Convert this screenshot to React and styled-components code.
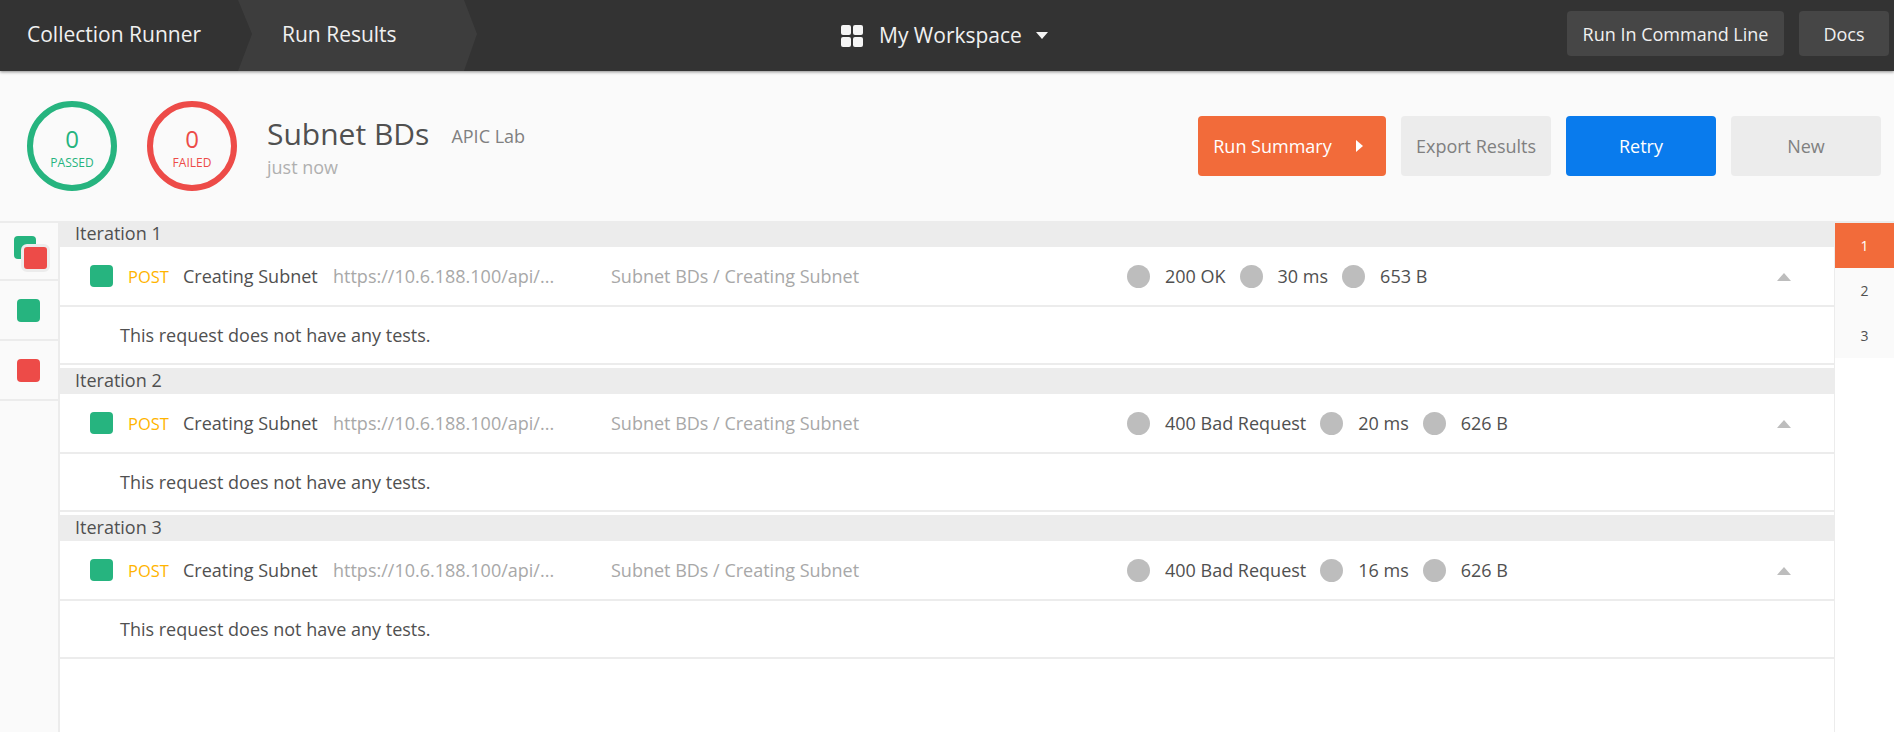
import React from "react";
import styled, { createGlobalStyle } from "styled-components";

const Global = createGlobalStyle`
  html, body { margin: 0; padding: 0; height: 100%; background: #fff; overflow: hidden; }
  #root { height: 100%; }
  * { box-sizing: border-box; }
`;

const Page = styled.div`
  width: 1894px;
  height: 732px;
  display: flex;
  flex-direction: column;
  font-family: "Open Sans", "Liberation Sans", sans-serif;
  color: #505050;
`;

const TopBar = styled.header`
  height: 71px;
  flex: none;
  background: #333;
  display: grid;
  grid-template-columns: 841px auto 1fr;
  align-items: center;
  box-shadow: 0 1px 3px rgba(0, 0, 0, 0.45);
  position: relative;
  z-index: 1;
  color: #f0f0f0;
`;

const Crumbs = styled.nav`
  display: flex;
  height: 71px;
`;

const FirstCrumb = styled.div`
  width: 238px;
  padding-left: 27px;
  font-size: 21px;
  line-height: 69px;
`;

const NextCrumb = styled.div`
  width: 239px;
  padding-left: 44px;
  font-size: 21px;
  line-height: 69px;
  background: #3d3d3d;
  clip-path: polygon(0 0, 226px 0, 239px 34px, 226px 71px, 0 71px, 14px 34px);
`;

const Workspace = styled.div`
  display: flex;
  align-items: center;
  font-size: 21px;
  height: 71px;
`;

const WorkspaceName = styled.span`
  margin: 0 14px 0 16px;
  line-height: 69px;
`;

const TopActions = styled.div`
  display: flex;
  justify-content: flex-end;
  gap: 15px;
  padding: 0 5px 4px 0;
`;

const TopButton = styled.button`
  height: 45px;
  width: ${(p) => p.$w}px;
  border: 0;
  border-radius: 4px;
  background: #464646;
  color: #f0f0f0;
  font: 18px "Open Sans", sans-serif;
  padding: 0;
`;

const Summary = styled.section`
  height: 150px;
  flex: none;
  background: #fafafa;
  display: flex;
  align-items: center;
  padding: 0 13px 0 27px;
`;

const Ring = styled.div`
  width: 90px;
  height: 90px;
  flex: none;
  margin-right: 30px;
  padding-top: 3px;
  border: 6px solid ${(p) => p.$c};
  border-radius: 50%;
  color: ${(p) => p.$c};
  display: flex;
  flex-direction: column;
  align-items: center;
  justify-content: center;
`;

const RingValue = styled.div`
  font-size: 24px;
  line-height: 30px;
  font-weight: 400;
`;

const RingLabel = styled.div`
  font-size: 12px;
  line-height: 16px;
  margin-top: 1px;
`;

const RunInfo = styled.div`
  flex: 1;
`;

const TitleLine = styled.div`
  display: flex;
  align-items: center;
`;

const Title = styled.h1`
  margin: 0;
  font-size: 30px;
  line-height: 38px;
  font-weight: 400;
  color: #505050;
`;

const Env = styled.span`
  margin: 4px 0 0 22px;
  font-size: 18px;
  color: #808080;
`;

const When = styled.div`
  margin: 2px 0 -2px;
  font-size: 18px;
  line-height: 24px;
  color: #b0b0b0;
`;

const Actions = styled.div`
  display: flex;
  gap: 15px;
`;

const ActionButton = styled.button`
  height: 60px;
  width: ${(p) => p.$w}px;
  border: 0;
  border-radius: 4px;
  background: ${(p) => p.$bg};
  color: ${(p) => p.$fg};
  font: 18px "Open Sans", sans-serif;
  padding: 0;
  display: flex;
  align-items: center;
  justify-content: center;
  gap: 24px;
`;

const SummaryButton = styled(ActionButton)`
  padding-right: 8px;
`;

const RightCaret = styled.span`
  width: 0;
  height: 0;
  border-left: 7px solid #fff;
  border-top: 6px solid transparent;
  border-bottom: 6px solid transparent;
`;

const Body = styled.div`
  flex: 1;
  display: flex;
  min-height: 0;
`;

const Filters = styled.aside`
  width: 60px;
  flex: none;
  background: #fafafa;
  border-right: 2px solid #ececec;
  border-top: 2px solid #ececec;
`;

const Filter = styled.div`
  height: ${(p) => (p.$first ? 58 : 60)}px;
  border-bottom: 2px solid #ececec;
  display: flex;
  align-items: center;
  padding-left: 17px;
`;

const Stack = styled.div`
  position: relative;
  width: 33px;
  height: 44px;
`;

const StackBack = styled.span`
  position: absolute;
  left: -3px;
  top: 7px;
  width: 22px;
  height: 23px;
  border-radius: 4px;
  background: #26b47f;
`;

const StackFront = styled.span`
  position: absolute;
  left: 4px;
  top: 15px;
  width: 29px;
  height: 28px;
  border-radius: 6px;
  background: #ed4b48;
  border: 3px solid #ececec;
`;

const Square = styled.span`
  width: ${(p) => p.$w || 23}px;
  height: ${(p) => p.$h || 23}px;
  flex: none;
  border-radius: 4px;
  background: ${(p) => p.$c};
`;

const Main = styled.main`
  flex: 1;
  min-width: 0;
  background: #fff;
`;

const Iteration = styled.div`
  margin-bottom: 3px;
`;

const IterationHead = styled.div`
  height: 26px;
  background: #ececec;
  padding-left: 15px;
  font-size: 18px;
  line-height: 24px;
  color: #505050;
`;

const ReqRow = styled.div`
  height: 60px;
  border-bottom: 2px solid #ececec;
  display: flex;
  align-items: center;
  padding: 0 0 0 30px;
  font-size: 18px;
  position: relative;
`;

const Method = styled.span`
  width: 55px;
  margin-left: 15px;
  font-size: 16.5px;
  color: #ffb400;
`;

const ReqName = styled.span`
  width: 150px;
`;

const Url = styled.span`
  width: 278px;
  color: #a8a8a8;
`;

const Path = styled.span`
  width: 516px;
  color: #a8a8a8;
`;

const Stat = styled.span`
  display: flex;
  align-items: center;
  gap: 15px;
  margin-right: 14px;
`;

const Dot = styled.span`
  width: 23px;
  height: 23px;
  flex: none;
  border-radius: 50%;
  background: #bdbdbd;
`;

const Collapse = styled.span`
  position: absolute;
  left: 1717px;
  top: 26px;
  width: 0;
  height: 0;
  border-left: 7px solid transparent;
  border-right: 7px solid transparent;
  border-bottom: 8px solid #bdbdbd;
`;

const Note = styled.div`
  height: 58px;
  border-bottom: 2px solid #ececec;
  padding-left: 60px;
  font-size: 18px;
  line-height: 56px;
`;

const Pager = styled.aside`
  width: 60px;
  flex: none;
  border-left: 1px solid #ececec;
  border-top: 2px solid #ececec;
`;

const PagerItem = styled.div`
  height: 45px;
  display: flex;
  align-items: center;
  justify-content: center;
  font-size: 14px;
  background: ${(p) => (p.$on ? "#f26b3a" : "#fafafa")};
  color: ${(p) => (p.$on ? "#fff" : "#505050")};
`;

const GridIcon = () => (
  <svg width="22" height="22" viewBox="0 0 22 22" fill="#f5f5f5">
    <rect x="0" y="0" width="10" height="10" rx="2" />
    <rect x="12" y="0" width="10" height="10" rx="2" />
    <rect x="0" y="12" width="10" height="10" rx="2" />
    <rect x="12" y="12" width="10" height="10" rx="2" />
  </svg>
);

const Caret = () => (
  <svg width="12" height="7" viewBox="0 0 12 7" fill="#f5f5f5">
    <path d="M0 0h12L6 7z" />
  </svg>
);

const iterations = [
  { n: 1, status: "200 OK", time: "30 ms", size: "653 B" },
  { n: 2, status: "400 Bad Request", time: "20 ms", size: "626 B" },
  { n: 3, status: "400 Bad Request", time: "16 ms", size: "626 B" },
];

export default function App() {
  return (
    <Page>
      <Global />
      <TopBar>
        <Crumbs>
          <FirstCrumb>Collection Runner</FirstCrumb>
          <NextCrumb>Run Results</NextCrumb>
        </Crumbs>
        <Workspace>
          <GridIcon />
          <WorkspaceName>My Workspace</WorkspaceName>
          <Caret />
        </Workspace>
        <TopActions>
          <TopButton $w={217}>Run In Command Line</TopButton>
          <TopButton $w={90}>Docs</TopButton>
        </TopActions>
      </TopBar>
      <Summary>
        <Ring $c="#26b47f">
          <RingValue>0</RingValue>
          <RingLabel>PASSED</RingLabel>
        </Ring>
        <Ring $c="#ed4b48">
          <RingValue>0</RingValue>
          <RingLabel>FAILED</RingLabel>
        </Ring>
        <RunInfo>
          <TitleLine>
            <Title>Subnet BDs</Title>
            <Env>APIC Lab</Env>
          </TitleLine>
          <When>just now</When>
        </RunInfo>
        <Actions>
          <SummaryButton $w={188} $bg="#f26b3a" $fg="#fff">
            Run Summary
            <RightCaret />
          </SummaryButton>
          <ActionButton $w={150} $bg="#ececec" $fg="#808080">Export Results</ActionButton>
          <ActionButton $w={150} $bg="#097bed" $fg="#fff">Retry</ActionButton>
          <ActionButton $w={150} $bg="#ececec" $fg="#808080">New</ActionButton>
        </Actions>
      </Summary>
      <Body>
        <Filters>
          <Filter $first>
            <Stack>
              <StackBack />
              <StackFront />
            </Stack>
          </Filter>
          <Filter><Square $c="#26b47f" /></Filter>
          <Filter><Square $c="#ed4b48" /></Filter>
        </Filters>
        <Main>
          {iterations.map((it) => (
            <Iteration key={it.n}>
              <IterationHead>Iteration {it.n}</IterationHead>
              <ReqRow>
                <Square $c="#26b47f" $h={22} />
                <Method>POST</Method>
                <ReqName>Creating Subnet</ReqName>
                <Url>https://10.6.188.100/api/...</Url>
                <Path>Subnet BDs / Creating Subnet</Path>
                <Stat><Dot />{it.status}</Stat>
                <Stat><Dot />{it.time}</Stat>
                <Stat><Dot />{it.size}</Stat>
                <Collapse />
              </ReqRow>
              <Note>This request does not have any tests.</Note>
            </Iteration>
          ))}
        </Main>
        <Pager>
          <PagerItem $on>1</PagerItem>
          <PagerItem>2</PagerItem>
          <PagerItem>3</PagerItem>
        </Pager>
      </Body>
    </Page>
  );
}
